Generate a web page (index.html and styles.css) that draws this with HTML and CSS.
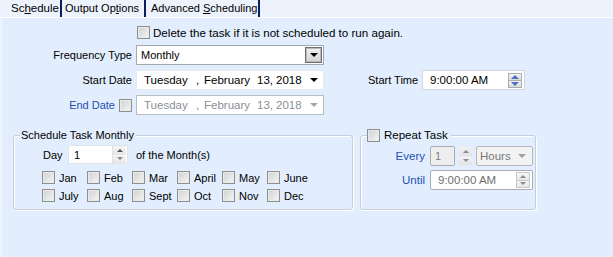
FILE: index.html
```html
<!DOCTYPE html>
<html lang="en">
<head>
    <meta charset="UTF-8">
    <title>Schedule</title>
    <link rel="stylesheet" href="styles.css">
</head>
<body>
    <nav class="tabs">
        <div class="tab tab-schedule">Sc<u>h</u>edule</div>
        <div class="tab tab-output">Output Op<u>t</u>ions</div>
        <div class="tab tab-advanced">Advanced <u>S</u>cheduling</div>
    </nav>

    <section class="content">
        <div class="row row-delete">
            <span class="chk"></span>
            <span class="chk-text">Delete the task if it is not scheduled to run again.</span>
        </div>

        <div class="row row-field">
            <label class="lbl">Frequency Type</label>
            <div class="select">
                <span>Monthly</span>
                <span class="dd-btn"><i class="tri"></i></span>
            </div>
        </div>

        <div class="row row-field">
            <label class="lbl">Start Date</label>
            <div class="date">
                <span class="d-day">Tuesday</span><span class="d-comma">,</span><span class="d-month">February</span><span class="d-num">13,</span><span>2018</span>
                <i class="tri date-arrow"></i>
            </div>
            <label class="lbl-time">Start Time</label>
            <div class="time">
                <span>9:00:00 AM</span>
                <span class="spin spin-blue">
                    <span class="spin-up"><i class="tri-up"></i></span>
                    <span class="spin-down"><i class="tri"></i></span>
                </span>
            </div>
        </div>

        <div class="row row-field">
            <div class="lbl lbl-end">
                <span class="blue">End Date</span>
                <span class="chk"></span>
            </div>
            <div class="date date-off">
                <span class="d-day">Tuesday</span><span class="d-comma">,</span><span class="d-month">February</span><span class="d-num">13,</span><span>2018</span>
                <i class="tri date-arrow"></i>
            </div>
        </div>

        <div class="groups">
            <div class="group group-monthly">
                <div class="group-title">Schedule Task Monthly</div>
                <div class="day-row">
                    <span class="day-lbl">Day</span>
                    <div class="num-box">
                        <span>1</span>
                        <span class="spin spin-gray">
                            <span class="spin-up"><i class="tri-up"></i></span>
                            <span class="spin-down"><i class="tri"></i></span>
                        </span>
                    </div>
                    <span class="of-month">of the Month(s)</span>
                </div>
                <div class="months">
                    <div class="month"><span class="chk"></span>Jan</div>
                    <div class="month"><span class="chk"></span>Feb</div>
                    <div class="month"><span class="chk"></span>Mar</div>
                    <div class="month"><span class="chk"></span>April</div>
                    <div class="month"><span class="chk"></span>May</div>
                    <div class="month"><span class="chk"></span>June</div>
                    <div class="month"><span class="chk"></span>July</div>
                    <div class="month"><span class="chk"></span>Aug</div>
                    <div class="month"><span class="chk"></span>Sept</div>
                    <div class="month"><span class="chk"></span>Oct</div>
                    <div class="month"><span class="chk"></span>Nov</div>
                    <div class="month"><span class="chk"></span>Dec</div>
                </div>
            </div>

            <div class="group group-repeat">
                <div class="group-title repeat-title"><span class="chk"></span>Repeat Task</div>
                <div class="rep-row">
                    <span class="rep-lbl blue">Every</span>
                    <div class="every-box">1</div>
                    <span class="spin spin-loose">
                        <span class="spin-up"><i class="tri-up"></i></span>
                        <span class="spin-down"><i class="tri"></i></span>
                    </span>
                    <div class="hours">
                        <span>Hours</span>
                        <i class="tri"></i>
                    </div>
                </div>
                <div class="rep-row rep-until">
                    <span class="rep-lbl blue">Until</span>
                    <div class="until-box">
                        <span>9:00:00 AM</span>
                        <span class="spin spin-gray">
                            <span class="spin-up"><i class="tri-up"></i></span>
                            <span class="spin-down"><i class="tri"></i></span>
                        </span>
                    </div>
                </div>
            </div>
        </div>
    </section>
</body>
</html>
```

FILE: styles.css
```css
body {
    margin: 0;
    width: 613px;
    height: 257px;
    overflow: hidden;
    font-family: "Liberation Sans", Arial, sans-serif;
    font-size: 11px;
    color: #000;
    background-color: #e2eefd;
}

/* tabs */
.tabs {
    display: flex;
    height: 17px;
    background-color: #ecf3fd;
    border-bottom: 1px solid #fff;
}

.tab {
    box-sizing: border-box;
    height: 17px;
    line-height: 17px;
    border-right: 2px solid #0c1d5e;
    white-space: nowrap;
}

.tab u {
    text-decoration-thickness: 1px;
    text-underline-offset: 1px;
}

.tab-schedule {
    width: 62px;
    padding-left: 11px;
    font-size: 11.5px;
}

.tab-output {
    width: 84px;
    padding-left: 3px;
}

.tab-advanced {
    width: 114px;
    padding-left: 5px;
}

/* form */
.content {
    height: 239px;
    box-sizing: border-box;
    padding-top: 8px;
    border-left: 2px solid #eef4fd;
}

.row {
    display: flex;
    align-items: center;
    white-space: nowrap;
}

.row-delete {
    height: 13px;
    padding-left: 135px;
}

.chk-text {
    margin-left: 3px;
    font-size: 11.6px;
}

.row-field {
    height: 20px;
    margin-top: 5px;
}

.row-delete + .row-field {
    margin-top: 6px;
}

.lbl {
    width: 130px;
    text-align: right;
    margin-right: 4px;
}

.lbl-end {
    display: flex;
    align-items: center;
    justify-content: flex-end;
    gap: 4px;
}

.blue {
    color: #1f4fb3;
}

.chk {
    display: inline-block;
    flex: none;
    box-sizing: border-box;
    width: 13px;
    height: 13px;
    border: 1px solid #8e8f8f;
    background: linear-gradient(135deg, #cfd0d1, #f6f6f6);
    box-shadow: inset 0 0 0 1px #eaeaea;
}

.tri {
    display: inline-block;
    width: 0;
    height: 0;
    border-left: 4px solid transparent;
    border-right: 4px solid transparent;
    border-top: 4px solid #000;
}

.tri-up {
    display: inline-block;
    width: 0;
    height: 0;
    border-left: 4px solid transparent;
    border-right: 4px solid transparent;
    border-bottom: 4px solid #000;
}

.select {
    box-sizing: border-box;
    width: 188px;
    height: 20px;
    display: flex;
    align-items: center;
    padding-left: 4px;
    padding-right: 1px;
    background-color: #fff;
    border: 1px solid #a3a9b1;
}

.dd-btn {
    margin-left: auto;
    box-sizing: border-box;
    width: 17px;
    height: 16px;
    display: flex;
    align-items: center;
    justify-content: center;
    border: 1px solid #6f6f6f;
    box-shadow: inset 0 0 0 1px #b9b9b9;
    background: linear-gradient(#f3f3f3, #d4d4d4);
}

.date {
    box-sizing: border-box;
    width: 188px;
    height: 20px;
    display: flex;
    align-items: center;
    padding-left: 7px;
    background-color: #fff;
    border: 1px solid #e6eaef;
    font-size: 11.5px;
}

.d-day {
    width: 52px;
}

.d-comma {
    width: 8px;
}

.d-month {
    width: 53px;
}

.d-num {
    width: 19px;
}

.date-arrow {
    margin-left: auto;
    margin-right: 5px;
}

.date-off {
    color: #8a8f96;
    border-color: #b9bec5;
}

.date-off .tri {
    border-top-color: #a4a8ad;
}

.lbl-time {
    width: 50px;
    margin-left: 44px;
    margin-right: 4px;
}

.time {
    box-sizing: border-box;
    width: 103px;
    height: 20px;
    display: flex;
    align-items: center;
    padding-left: 7px;
    padding-right: 2px;
    background-color: #fff;
    border: 1px solid #d3d8de;
    font-size: 11.5px;
}

.spin {
    margin-left: auto;
    display: flex;
    flex-direction: column;
    width: 14px;
    height: 15px;
}

.spin span {
    flex: 1;
    display: flex;
    align-items: center;
    justify-content: center;
}

.spin-blue span {
    border: 1px solid #a8adb3;
    background: linear-gradient(#f4f4f4, #dcdcdc);
}

.spin-blue .spin-up {
    border-bottom: none;
}

.spin-blue .tri {
    border-top-color: #4f6ec9;
}

.spin-blue .tri-up {
    border-bottom-color: #4f6ec9;
}

.spin-gray span {
    background: linear-gradient(#f6f6f6, #e6e6e6);
    border-left: 1px solid #e0e0e0;
}

.spin-gray .tri {
    border-top-color: #8a8a8a;
    border-left-width: 3px;
    border-right-width: 3px;
    border-top-width: 3px;
}

.spin-gray .tri-up {
    border-bottom-color: #555;
    border-left-width: 3px;
    border-right-width: 3px;
    border-bottom-width: 3px;
}

/* groups */
.groups {
    display: flex;
    margin-top: 20px;
    padding-left: 11px;
}

.group {
    position: relative;
    box-sizing: border-box;
    height: 75px;
    border: 1px solid #c6ced9;
    border-radius: 3px;
    box-shadow: inset 1px 1px 0 #fff, 1px 1px 0 #fff;
}

.group-monthly {
    width: 340px;
    padding: 9px 0 0 29px;
}

.group-repeat {
    width: 176px;
    margin-left: 7px;
    padding-top: 10px;
}

.group-title {
    position: absolute;
    top: -8px;
    left: 6px;
    padding: 0 2px 0 1px;
    line-height: 14px;
    background-color: #e2eefd;
}

.repeat-title {
    top: -8px;
    left: 6px;
    padding: 0 3px 0 0;
    display: flex;
    align-items: center;
    gap: 4px;
    font-size: 11.5px;
}

.day-row {
    display: flex;
    align-items: center;
    height: 19px;
}

.day-lbl {
    width: 25px;
}

.num-box {
    box-sizing: border-box;
    width: 60px;
    height: 19px;
    display: flex;
    align-items: center;
    padding-left: 5px;
    padding-right: 1px;
    background-color: #fff;
    border: 1px solid #dfe4ea;
}

.num-box .spin {
    height: 17px;
}

.of-month {
    margin-left: 8px;
}

.months {
    display: grid;
    grid-template-columns: repeat(6, 45px);
    row-gap: 5px;
    margin-top: 7px;
    margin-left: -1px;
}

.month {
    display: flex;
    align-items: center;
    gap: 4px;
    height: 13px;
}

.rep-row {
    display: flex;
    align-items: center;
    height: 20px;
}

.rep-until {
    margin-top: 4px;
}

.rep-lbl {
    width: 64px;
    text-align: right;
    margin-right: 5px;
    font-size: 11.5px;
}

.every-box {
    box-sizing: border-box;
    width: 25px;
    height: 20px;
    padding-left: 4px;
    line-height: 18px;
    color: #7d7d7d;
    background-color: #eeeeee;
    border: 1px solid #a9adb2;
    border-radius: 2px;
}

.spin-loose {
    margin-left: 4px;
    width: 13px;
    height: 18px;
    gap: 1px;
}

.spin-loose span {
    background: linear-gradient(#f2f2f2, #e2e2e2);
}

.spin-loose .tri {
    border-top-color: #8a8a8a;
    border-width: 3px 3px 0 3px;
}

.spin-loose .tri-up {
    border-bottom-color: #8a8a8a;
    border-width: 0 3px 3px 3px;
}

.hours {
    box-sizing: border-box;
    width: 57px;
    height: 20px;
    margin-left: 4px;
    display: flex;
    align-items: center;
    padding: 0 6px 0 3px;
    color: #777;
    background-color: #f3f3f3;
    border: 1px solid #b5b9be;
    border-radius: 2px;
    font-size: 11.5px;
}

.hours .tri {
    margin-left: auto;
    border-top-color: #a0a0a0;
}

.until-box {
    box-sizing: border-box;
    width: 103px;
    height: 20px;
    display: flex;
    align-items: center;
    padding-left: 7px;
    padding-right: 2px;
    color: #6f6f6f;
    background-color: #fff;
    border: 1px solid #a9adb2;
    border-radius: 2px;
    font-size: 11.5px;
}

.until-box .spin {
    height: 16px;
}

.until-box .spin span {
    border: 1px solid #c8c8c8;
}

.until-box .spin-up {
    border-bottom: none !important;
}

.until-box .tri-up {
    border-bottom-color: #8a8a8a;
}
```
